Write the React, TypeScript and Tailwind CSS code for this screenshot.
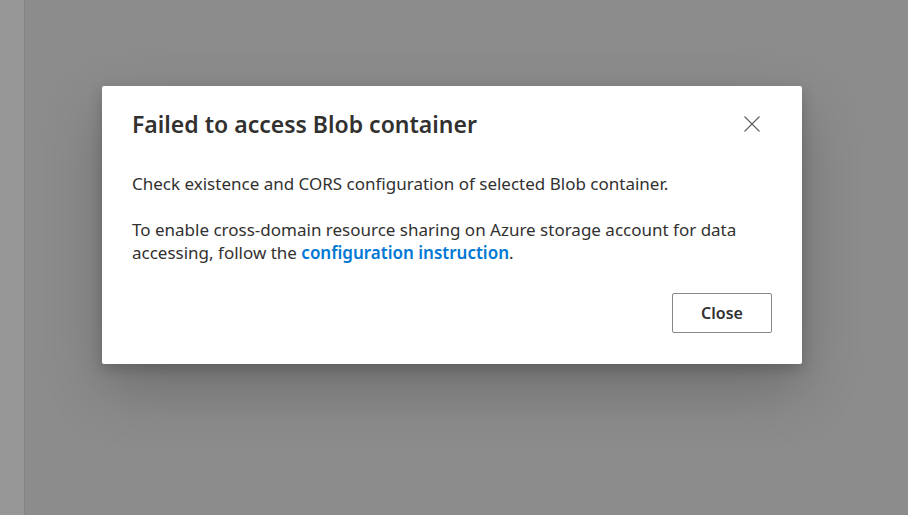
export default function App() {
  return (
    <div className="relative h-[515px] w-[908px] overflow-hidden bg-[#8c8c8c] font-['Noto_Sans',sans-serif]">
      <div className="flex h-full">
        <div className="w-[25px] shrink-0 border-r border-[#858585] bg-[#979797]" />
        <div className="flex-1 bg-[#8c8c8c]" />
      </div>

      <div className="absolute inset-0 flex items-start pl-[102px] pt-[86px]">
        <div className="flex w-[700px] flex-col rounded-[2px] bg-white px-[30px] pb-[31px] pt-[20px] shadow-[0_25px_58px_rgba(0,0,0,0.22),0_5px_14px_rgba(0,0,0,0.18)]">
          <div className="flex items-center justify-between">
            <h2 className="text-[23px] font-semibold leading-[36px] text-[#323130]">
              Failed to access Blob container
            </h2>
            <button className="mr-[12px] flex h-[16px] w-[16px] items-center justify-center">
              <svg width="16" height="16" viewBox="0 0 16 16" fill="none" stroke="#605e5c" strokeWidth="1.1">
                <path d="M0.5 0.5L15.5 15.5M15.5 0.5L0.5 15.5" />
              </svg>
            </button>
          </div>

          <div className="mt-[30px] text-[17px] leading-[23px] text-[#323130]">
            <p>Check existence and CORS configuration of selected Blob container.</p>
            <p className="mt-[23px]">
              To enable cross-domain resource sharing on Azure storage account for data accessing, follow the{' '}
              <a className="font-semibold text-[#0078d4]">configuration instruction</a>.
            </p>
          </div>

          <div className="mt-[29px] flex justify-end">
            <button className="h-[40px] w-[100px] rounded-[2px] border border-[#8a8886] bg-white text-[16px] font-semibold text-[#323130]">
              Close
            </button>
          </div>
        </div>
      </div>
    </div>
  )
}
